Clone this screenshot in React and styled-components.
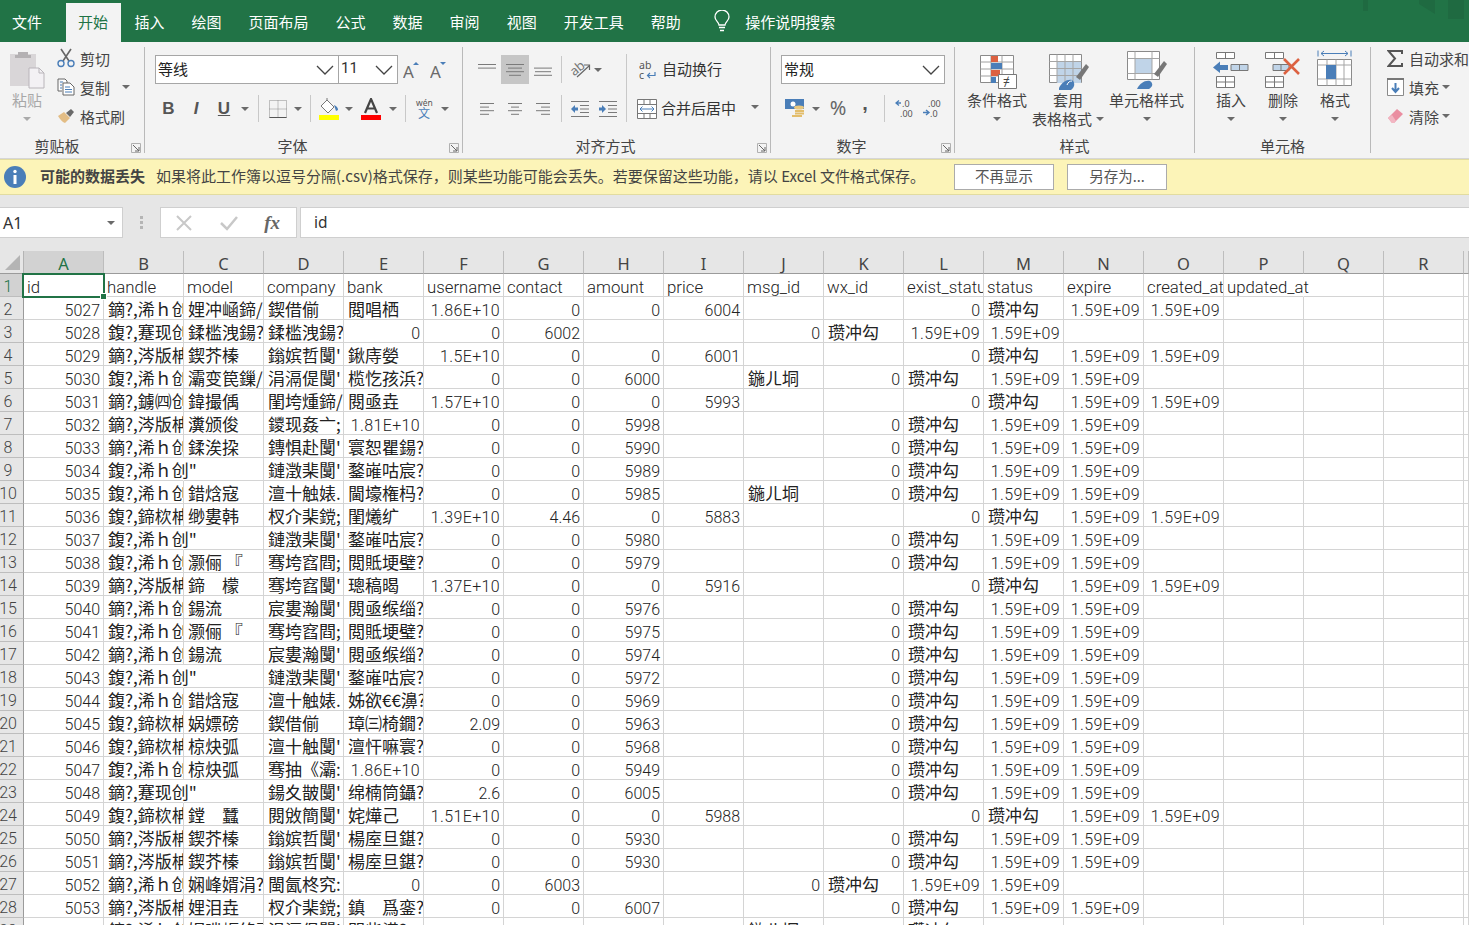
import styled, { createGlobalStyle } from 'styled-components';

const COLUMNS = 'ABCDEFGHIJKLMNOPQR'.split('');
const TABS = ['文件', '开始', '插入', '绘图', '页面布局', '公式', '数据', '审阅', '视图', '开发工具', '帮助'];
const HEADERS = ['id', 'handle', 'model', 'company', 'bank', 'username', 'contact', 'amount', 'price', 'msg_id', 'wx_id', 'exist_status', 'status', 'expire', 'created_at', 'updated_at'];

const Z = '瓒冲勾';
const E9 = '1.59E+09';
const ONLINE = '鍦ㄦ垌';
const PAY = '浠ｈ创';
const BUY = '涔版柟';
const SELL = '鍗栨柟';

const a = (f, g, i) => [f, g, '0', i, '', '', '0', Z, E9, E9, ''];
const b = (f, g, h, j = '') => [f, g, h, '', j, '0', Z, E9, E9, '', ''];
const c = (g) => ['0', g, '', '', '0', Z, E9, E9, '', '', ''];

const ROWS = [
  ['鏑?,' + PAY, '娌冲崡鍗/', '鍥借偂', '閲唱栖', ...a('1.86E+10', '0', '6004')],
  ['鍑?,蹇现创', '鍒槛洩鍚?', '鍒槛洩鍚?', '0', ...c('6002')],
  ['鏑?,' + BUY, '鍥芥榛', '鎓嫔哲闅\'', '鍬庤嫈', ...a('1.5E+10', '0', '6001')],
  ['鍑?,' + PAY, '灞变笢鏁/', '涓滆偍闅\'', '榄忔孩浜?', ...b('0', '0', '6000', ONLINE)],
  ['鏑?,鐪㈣创', '鍏撮偊', '閨垮煄鍗/', '閱亟垚', ...a('1.57E+10', '0', '5993')],
  ['鏑?,' + BUY, '瀵颁俊', '鑁现姦亠;', '1.81E+10', ...b('0', '0', '5998')],
  ['鏑?,' + PAY, '鍒涘挅', '鏄惧赴闅\'', '寰恕瞿鍚?', ...b('0', '0', '5990')],
  ['鍑?,' + PAY + '"', '', '鏈澂棐闅\'', '鍪嶉咕宸?', ...b('0', '0', '5989')],
  ['鍑?,' + PAY, '錯焓寇', '澶十触婊.', '閫壕権杩?', ...b('0', '0', '5985', ONLINE)],
  ['鍑?,' + SELL, '缈婁韩', '杈介棐鎲;', '閨爔纩', ...a('1.39E+10', '4.46', '5883')],
  ['鍑?,' + PAY + '"', '', '鏈澂棐闅\'', '鍪嶉咕宸?', ...b('0', '0', '5980')],
  ['鍑?,' + PAY, '灏俪 『', '骞垮窞閰;', '閲貾埂璧?', ...b('0', '0', '5979')],
  ['鏑?,' + BUY, '鍗　檬', '骞垮窞闅\'', '璁稿暍', ...a('1.37E+10', '0', '5916')],
  ['鏑?,' + PAY, '鍚流', '宸婁瀚闅\'', '閱亟缑缁?', ...b('0', '0', '5976')],
  ['鍑?,' + PAY, '灏俪 『', '骞垮窞閰;', '閲貾埂璧?', ...b('0', '0', '5975')],
  ['鏑?,' + PAY, '鍚流', '宸婁瀚闅\'', '閱亟缑缁?', ...b('0', '0', '5974')],
  ['鍑?,' + PAY + '"', '', '鏈澂棐闅\'', '鍪嶉咕宸?', ...b('0', '0', '5972')],
  ['鍑?,' + PAY, '錯焓寇', '澶十触婊.', '姊欲€€濞?', ...b('0', '0', '5969')],
  ['鍑?,' + SELL, '娲嫖磅', '鍥借偂', '璋㈢椅鐗?', ...b('2.09', '0', '5963')],
  ['鍑?,' + SELL, '椋炔弧', '澶十触闅\'', '澶忓嘛寰?', ...b('0', '0', '5968')],
  ['鍑?,' + PAY, '椋炔弧', '骞抽《灞:', '1.86E+10', ...b('0', '0', '5949')],
  ['鏑?,蹇现创"', '', '鍚夊皵闅\'', '绵楠筒鑷?', ...b('2.6', '0', '6005')],
  ['鍑?,' + SELL, '鏜　蠶', '閱敓簡闅\'', '姹燁己', ...a('1.51E+10', '0', '5988')],
  ['鏑?,' + BUY, '鍥芥榛', '鎓嫔哲闅\'', '楊庢旦鍖?', ...b('0', '0', '5930')],
  ['鏑?,' + BUY, '鍥芥榛', '鎓嫔哲闅\'', '楊庢旦鍖?', ...b('0', '0', '5930')],
  ['鏑?,' + PAY, '娴峰婿涓?', '閩氤柊究:', '0', ...c('6003')],
  ['鏑?,' + BUY, '娌泪垚', '杈介棐鎲;', '鎮　爲銮?', ...b('0', '0', '6007')],
  ['鏑?,' + PAY, '娓呭崕绉戞', '涓滆偍闅\'', '闃呰鍙?', ...b('0', '0', '6008', ONLINE)],
];

const isNum = (v) => /^[\d.]+(E\+\d+)?$/.test(v);

const GlobalStyle = createGlobalStyle`
  html, body {
    margin: 0;
    height: 100%;
    overflow: hidden;
    background: #fff;
  }
  * { box-sizing: border-box; }
`;

const Page = styled.div`
  width: 1469px;
  height: 925px;
  overflow: hidden;
  display: flex;
  flex-direction: column;
  font-family: "Noto Sans CJK SC", "Noto Sans", sans-serif;
`;

const TabBar = styled.div`
  position: relative;
  flex: 0 0 42px;
  display: flex;
  align-items: flex-end;
  background: #217346;
  color: #fff;
  font-size: 15px;
`;

const Tab = styled.div`
  height: 39px;
  padding: ${({ $first, $active }) =>
    $first ? '0 24px 3px 12px' : $active ? '0 13px 3px 12px' : '0 13.5px 3px'};
  display: flex;
  align-items: center;
  background: ${({ $active }) => ($active ? '#f3f3f3' : 'transparent')};
  color: ${({ $active }) => ($active ? '#217346' : '#fff')};
`;

const Search = styled.div`
  height: 39px;
  margin-left: 20px;
  padding-bottom: 3px;
  display: flex;
  align-items: center;
  gap: 15px;
`;

const Decor = styled.svg`
  position: absolute;
  top: 0;
  right: 0;
`;

const Ribbon = styled.div`
  flex: 0 0 117px;
  padding: 5px 0 5px;
  display: flex;
  background: #f3f3f3;
  border-bottom: 1px solid #d6d6d6;
  color: #444;
  font-size: 15px;
`;

const Group = styled.div`
  position: relative;
  flex: 0 0 ${({ $w }) => $w}px;
  height: 106px;
  padding-left: ${({ $pl }) => $pl || 0}px;
  border-right: ${({ $last }) => ($last ? 'none' : '1px solid #b9b9b9')};
`;

const GroupLabel = styled.div`
  position: absolute;
  left: 0;
  right: ${({ $inset }) => $inset || 0}px;
  bottom: -2px;
  text-align: center;
  font-size: 15px;
  line-height: 18px;
  color: #444;
`;

const Launcher = styled.svg`
  position: absolute;
  right: 3px;
  bottom: 0;
`;

const Stack = styled.div`
  padding-top: 8px;
  display: flex;
  flex-direction: column;
  gap: 10px;
`;

const Line = styled.div`
  height: 29px;
  display: flex;
  align-items: center;
`;

const Tool = styled.div`
  flex: 0 0 ${({ $w }) => $w}px;
  height: 29px;
  display: flex;
  align-items: center;
  justify-content: center;
  background: ${({ $on }) => ($on ? '#c6c6c6' : 'transparent')};
`;

const Caret = styled.span`
  display: inline-block;
  width: 0;
  height: 0;
  margin-left: ${({ $ml }) => $ml || 0}px;
  border-left: 4px solid transparent;
  border-right: 4px solid transparent;
  border-top: 4px solid ${({ $light }) => ($light ? '#aaa' : '#6a6a6a')};
`;

const Divider = styled.span`
  display: block;
  width: 1px;
  height: 27px;
  background: #c8c8c8;
`;

const Combo = styled.div`
  flex: 0 0 ${({ $w }) => $w}px;
  height: 29px;
  margin-left: ${({ $ml }) => $ml || 0}px;
  padding: 0 4px 0 2px;
  display: flex;
  align-items: center;
  justify-content: space-between;
  background: #fff;
  border: 1px solid #a6a6a6;
  color: #222;
  font-size: 15px;

  span {
    margin-top: -3px;
  }

  svg {
    flex: none;
  }
`;

const ComboNumber = styled.span`
  color: #333;
  font-family: Roboto, sans-serif;
`;

const StyleGlyph = styled.span`
  color: #555;
  font-family: "Liberation Sans", sans-serif;
  font-size: 17px;
  font-weight: 700;
  font-style: ${({ $italic }) => ($italic ? 'italic' : 'normal')};
  text-decoration: ${({ $under }) => ($under ? 'underline' : 'none')};
`;

const PercentGlyph = styled.span`
  color: #666;
  font-family: "Noto Sans", sans-serif;
  font-size: 20px;
  margin-top: -3px;
`;

const CommaGlyph = styled(StyleGlyph)`
  font-size: 20px;
  margin-top: -10px;
`;

const ClipLayout = styled.div`
  display: flex;
`;

const PasteButton = styled.div`
  width: 38px;
  margin-left: 8px;
  padding-top: 3px;
  display: flex;
  flex-direction: column;
  align-items: center;
  color: #a8a8a8;
  font-size: 15px;
  line-height: 19px;
`;

const SmallList = styled.div`
  margin-top: -3px;
  margin-left: ${({ $ml }) => $ml}px;
  display: flex;
  flex-direction: column;
`;

const SmallRow = styled.div`
  height: 29px;
  padding-bottom: 1px;
  display: flex;
  align-items: center;
  white-space: nowrap;
`;

const SmallIcon = styled.span`
  flex: 0 0 ${({ $w }) => $w}px;
  display: flex;
  align-items: center;
`;

const AlignLayout = styled.div`
  display: flex;
`;

const AlignRight = styled(Stack)`
  margin-left: 10px;
`;

const BigDivider = styled.span`
  display: block;
  width: 1px;
  height: 68px;
  margin-top: 7px;
  margin-left: 4px;
  background: #c8c8c8;
`;

const TextTool = styled.div`
  height: 29px;
  padding-left: ${({ $pl }) => $pl || 0}px;
  display: flex;
  align-items: center;
  gap: ${({ $gap }) => $gap}px;
  white-space: nowrap;
  color: #333;

  span {
    margin-top: -3px;
  }
`;

const BigRow = styled.div`
  display: flex;
  gap: ${({ $gap }) => $gap || 0}px;
`;

const BigButton = styled.div`
  flex: 0 0 ${({ $w }) => $w}px;
  padding-top: 2px;
  display: flex;
  flex-direction: column;
  align-items: center;
  white-space: nowrap;
  font-size: 15px;
  line-height: 19px;
`;

const BigIcon = styled.div`
  height: 41px;
  padding-top: ${({ $top }) => $top}px;
  padding-left: ${({ $left }) => $left || 0}px;
  display: flex;
  align-items: flex-start;
  justify-content: center;
`;

const CaretLine = styled.div`
  height: 19px;
  display: flex;
  align-items: center;
  gap: 4px;
`;

const MessageBar = styled.div`
  flex: 0 0 36px;
  padding-left: 4px;
  display: flex;
  align-items: center;
  background: #fcf4b8;
  border-top: 1px solid #e2dca0;
  border-bottom: 1px solid #e2dca0;
  font-size: 15px;
  color: #444;
  white-space: nowrap;
`;

const MessageTitle = styled.b`
  margin-left: 14px;
  margin-top: -3px;
  width: 116px;
  font-weight: 700;
`;

const MessageText = styled.span`
  width: 798px;
  margin-top: -3px;
  font-size: 15px;
`;

const MessageButton = styled.div`
  width: 100px;
  height: 26px;
  margin-right: 13px;
  padding-bottom: 3px;
  display: flex;
  align-items: center;
  justify-content: center;
  background: #fff;
  border: 1px solid #ababab;
  color: #555;
  font-size: 14.5px;
`;

const FormulaArea = styled.div`
  flex: 0 0 56px;
  padding-top: 12px;
  display: flex;
  background: #e6e6e6;
`;

const NameBox = styled.div`
  width: 123px;
  height: 31px;
  padding: 0 7px 0 3px;
  display: flex;
  align-items: center;
  justify-content: space-between;
  background: #fff;
  border: 1px solid #cfcfcf;
  border-left: 0;
  color: #333;
  font: 16px "Noto Sans", sans-serif;
`;

const Grip = styled.div`
  width: 37px;
  height: 31px;
  display: flex;
  flex-direction: column;
  align-items: center;
  justify-content: center;
  gap: 2px;

  i {
    display: block;
    width: 3px;
    height: 3px;
    background: #b5b5b5;
  }
`;

const FxBox = styled.div`
  width: 137px;
  height: 31px;
  padding: 0 16px 0 14px;
  display: flex;
  align-items: center;
  justify-content: space-between;
  background: #fff;
  border: 1px solid #cfcfcf;
`;

const FxGlyph = styled.span`
  font: italic bold 19px "Liberation Serif", serif;
  color: #666;
`;

const FormulaInput = styled.div`
  flex: 1;
  height: 31px;
  margin-left: 3px;
  padding-left: 13px;
  padding-bottom: 2px;
  display: flex;
  align-items: center;
  background: #fff;
  border: 1px solid #cfcfcf;
  border-right: 0;
  color: #333;
  font: 15.5px "Noto Sans", sans-serif;
`;

const Sheet = styled.div`
  flex: 1;
  display: grid;
  grid-template-columns: 24px repeat(18, 80px) 1fr;
  grid-auto-rows: 23px;
  align-content: start;
  background: #fff;
`;

const Corner = styled.div`
  position: relative;
  background: #e6e6e6;
  border-right: 1px solid #b4b4b4;
  border-bottom: 1px solid #9b9b9b;

  &::after {
    content: '';
    position: absolute;
    right: 3px;
    bottom: 3px;
    border-left: 15px solid transparent;
    border-bottom: 15px solid #b4b4b4;
  }
`;

const ColHead = styled.div`
  padding-top: 2px;
  display: flex;
  align-items: center;
  justify-content: center;
  background: ${({ $active }) => ($active ? '#d2d2d2' : '#e6e6e6')};
  border-right: 1px solid #bdbdbd;
  border-bottom: 1px solid ${({ $active }) => ($active ? '#217346' : '#9b9b9b')};
  color: ${({ $active }) => ($active ? '#217346' : '#444')};
  font: 16.5px "Noto Sans", sans-serif;
`;

const RowHead = styled.div`
  padding: 3px 7px 0 0;
  overflow: hidden;
  display: flex;
  align-items: center;
  justify-content: center;
  background: ${({ $active }) => ($active ? '#d2d2d2' : '#e6e6e6')};
  border-right: 1px solid ${({ $active }) => ($active ? '#217346' : '#9b9b9b')};
  border-bottom: 1px solid #bdbdbd;
  color: ${({ $active }) => ($active ? '#217346' : '#444')};
  font: 300 16px Roboto, sans-serif;
`;

const Cell = styled.div`
  position: relative;
  z-index: ${({ $selected }) => ($selected ? 1 : 'auto')};
  padding: ${({ $num, $latin }) => ($num ? '3px 3px 0 0' : $latin ? '3px 0 0 3px' : '1px 0 0 4px')};
  overflow: ${({ $spill }) => ($spill ? 'visible' : 'hidden')};
  white-space: nowrap;
  text-align: ${({ $num }) => ($num ? 'right' : 'left')};
  border-right: 1px solid ${({ $spill }) => ($spill ? 'transparent' : '#d4d4d4')};
  border-bottom: 1px solid #d4d4d4;
  color: #222;
  font-family: ${({ $num, $latin }) =>
    $num || $latin ? 'Roboto, sans-serif' : '"Noto Sans CJK SC", sans-serif'};
  font-size: ${({ $num, $latin }) => ($num ? '16px' : $latin ? '16.8px' : '17px')};
  font-weight: ${({ $num, $latin }) => ($num || $latin ? 300 : 400)};
  letter-spacing: ${({ $sci }) => ($sci ? '0.35px' : 'normal')};
  line-height: 21px;
`;

const Selection = styled.div`
  position: absolute;
  top: -1px;
  left: -2px;
  right: -2px;
  bottom: -2px;
  border: 2px solid #217346;

  &::after {
    content: '';
    position: absolute;
    right: -4px;
    bottom: -4px;
    width: 5px;
    height: 5px;
    background: #217346;
    border: 1px solid #fff;
    box-sizing: content-box;
  }
`;

const GRAY = '#7a7a7a';
const BLUE = '#4a7eb8';

const Lines = ({ rows, w = 18 }) => (
  <svg width={w} height="14" viewBox={`0 0 ${w} 14`}>
    {rows.map(([x1, x2], i) => (
      <path key={i} d={`M${x1} ${1.5 + i * 3.6}H${x2}`} stroke={GRAY} strokeWidth="1" />
    ))}
  </svg>
);

const Chevron = () => (
  <svg width="18" height="10" viewBox="0 0 18 10">
    <path d="M1 1l8 8 8-8" fill="none" stroke="#444" strokeWidth="1.3" />
  </svg>
);

const Launch = () => (
  <Launcher width="10" height="10" viewBox="0 0 10 10">
    <path d="M.5 9.5V.5h9v9z" fill="none" stroke="#b0b0b0" />
    <path d="M2 2l6 6M8 4v4H4" fill="none" stroke="#666" />
  </Launcher>
);

const PasteIcon = () => (
  <svg width="36" height="40" viewBox="0 0 36 40">
    <rect x="1" y="4" width="26" height="32" fill="#d9d6d8" />
    <path d="M9 5V2h10v3h3v3H6V5z" fill="#b4b1b3" />
    <path d="M20 18h10l5 5v15H20z" fill="#f3f1f4" stroke="#b9b5ba" />
    <path d="M30 18v5h5" fill="none" stroke="#b9b5ba" />
  </svg>
);

const ScissorsIcon = () => (
  <svg width="18" height="20" viewBox="0 0 18 20">
    <path d="M4 1l8 12M14 1L6 13" stroke="#666" strokeWidth="1.6" fill="none" />
    <circle cx="4" cy="15.5" r="3" fill="none" stroke={BLUE} strokeWidth="1.4" />
    <circle cx="14" cy="15.5" r="3" fill="none" stroke={BLUE} strokeWidth="1.4" />
  </svg>
);

const CopyIcon = () => (
  <svg width="18" height="18" viewBox="0 0 18 18">
    <path d="M1 1h7l2 2v2M1 1v12h4" fill="#fff" stroke="#666" />
    <path d="M6 5h7l4 4v8H6z" fill="#fff" stroke="#666" />
    <path d="M8 9h5M8 11.5h7M8 14h7M3 4h3M3 7h2M3 10h2" stroke={BLUE} />
  </svg>
);

const BrushIcon = () => (
  <svg width="18" height="16" viewBox="0 0 18 16">
    <path d="M1 8l6-4 6 6-5 5C5 14 3 11 1 8z" fill="#e3bd85" />
    <path d="M9 5l5-4 3 3-4 5z" fill="#6a6a6a" />
  </svg>
);

const GrowA = ({ down }) => (
  <svg width="17" height="18" viewBox="0 0 17 18">
    <text x="0" y="17" fontFamily="Noto Sans" fontSize="17" fill="#6a6a6a">A</text>
    <path d={down ? 'M10 1h6l-3 3z' : 'M10 4l3-3 3 3z'} fill={BLUE} />
  </svg>
);

const BorderIcon = () => (
  <svg width="18" height="18" viewBox="0 0 18 18">
    <path d="M.5.5h17v17H.5zM9 .5v17M.5 9h17" fill="none" stroke="#8a8a8a" strokeDasharray="1 1" />
    <path d="M.5 17.5h17" stroke="#555" />
  </svg>
);

const FillIcon = () => (
  <svg width="20" height="22" viewBox="0 0 20 22">
    <path d="M8 2l7 7-6 6-7-7z" fill="#fff" stroke="#777" />
    <path d="M8 2V0" stroke="#777" />
    <path d="M15 7c3 1 4 3 4 5l-2 1z" fill={BLUE} />
    <rect x="0" y="17" width="20" height="5" fill="#ff0" />
  </svg>
);

const FontColorIcon = () => (
  <svg width="20" height="22" viewBox="0 0 20 22">
    <path d="M4 15L10 1l6 14M6 10.5h8" fill="none" stroke="#444" strokeWidth="2.2" />
    <rect x="0" y="17" width="20" height="5" fill="#f00" />
  </svg>
);

const WenIcon = () => (
  <svg width="18" height="22" viewBox="0 0 18 22">
    <text x="1" y="8" fontFamily="Noto Sans" fontSize="8.5" fill="#555">wén</text>
    <text x="3" y="20" fontFamily="Noto Sans CJK SC" fontSize="12" fill={BLUE}>文</text>
  </svg>
);

const OrientIcon = () => (
  <svg width="22" height="22" viewBox="0 0 22 22">
    <text x="1" y="14" fontFamily="Noto Sans" fontSize="13" fill="#777" transform="rotate(-40 8 10)">ab</text>
    <path d="M8 18L20 7M15 6h5.500v5" fill="none" stroke="#666" strokeWidth="1.2" />
  </svg>
);

const IndentIcon = ({ out }) => (
  <svg width="18" height="16" viewBox="0 0 18 16">
    <path d="M0 .5h18M9 4.500h9M9 8h9M9 11.500h9M0 15.500h18" stroke={GRAY} />
    <path d={out ? 'M0 8l4-4v2.500h3v3H4V12z' : 'M7 8L3 4v2.500H0v3h3V12z'} fill={BLUE} />
  </svg>
);

const WrapIcon = () => (
  <svg width="17" height="20" viewBox="0 0 17 20">
    <text x="0" y="9" fontFamily="Noto Sans" fontSize="10.500" fill="#555">ab</text>
    <text x="0" y="19" fontFamily="Noto Sans" fontSize="10.500" fill="#555">c</text>
    <path d="M16 12v3.500H9M11 13l-2.500 2.500L11 18" fill="none" stroke={BLUE} strokeWidth="1.2" />
  </svg>
);

const MergeIcon = () => (
  <svg width="20" height="20" viewBox="0 0 20 20">
    <path d="M.5.5h19v19H.5zM.5 5.500h19M.5 14.500h19M7 .5v5M13 .5v5M7 14.500v5M13 14.500v5" fill="#fff" stroke="#777" />
    <path d="M3 10h14M5.500 7.500L3 10l2.500 2.500M14.500 7.500L17 10l-2.500 2.500" fill="none" stroke={BLUE} />
  </svg>
);

const CurrencyIcon = () => (
  <svg width="20" height="19" viewBox="0 0 20 19">
    <rect x="0" y="0" width="19" height="10" fill={BLUE} />
    <circle cx="8" cy="5" r="2.500" fill="#fff" />
    <path d="M10 12h9M10 14.500h9M7 17h10" stroke="#e3bd6b" strokeWidth="2" />
    <ellipse cx="14" cy="8.500" rx="5" ry="2" fill="#e9c87f" />
  </svg>
);

const DecimalIcon = ({ dec }) => (
  <svg width="18" height="20" viewBox="0 0 18 20">
    <text x={dec ? 5 : 7} y="8" fontFamily="Noto Sans" fontSize="9" fill="#555">{dec ? '.00' : '.0'}</text>
    <text x={dec ? 7 : 5} y="18" fontFamily="Noto Sans" fontSize="9" fill="#555">{dec ? '.0' : '.00'}</text>
    <path d={dec ? 'M0 13.500h5M3 11l3 2.500L3 16' : 'M6 4h-5M4 1.500L1 4l3 2.500'} fill="none" stroke={BLUE} strokeWidth="1.400" />
  </svg>
);

const CondIcon = () => (
  <svg width="38" height="40" viewBox="0 0 38 40">
    <path d="M.5.5h33v27H.5z" fill="#fff" stroke="#8a8a8a" />
    <path d="M.5 7h33M.5 14h33M.5 21h33M11 .5v27M22 .5v27" stroke="#a0a0a0" />
    <rect x="11" y="1" width="7" height="6" fill="#dc6141" />
    <rect x="11" y="8" width="11" height="6" fill="#4a7eb8" />
    <rect x="11" y="15" width="9" height="6" fill="#dc6141" />
    <rect x="11" y="22" width="5" height="6" fill="#4a7eb8" />
    <path d="M18.500 19.500h18v14h-18z" fill="#fff" stroke="#777" />
    <text x="23" y="31" fontFamily="Noto Sans" fontSize="12" fill="#444">≠</text>
  </svg>
);

const TableIcon = () => (
  <svg width="40" height="42" viewBox="0 0 40 42">
    <path d="M.5.500h32v28H.5z" fill="#fff" stroke="#8a8a8a" />
    <rect x="8" y="8" width="24" height="21" fill="#c0d4e8" />
    <path d="M.5 7.500h32M.5 14.500h32M.5 21.500h32M8 .500v28M16 .500v28M24 .500v28" stroke="#a5a5a5" />
    <path d="M27 23l10-13 3 3-9 13z" fill="#777" />
    <path d="M10 34c3-6 8-9 13-8 4 3 2 8-1 10H10z" fill="#4a7eb8" />
    <path d="M18 31c1-3 3-4 5-4" stroke="#fff" fill="none" />
  </svg>
);

const StyleIcon = () => (
  <svg width="40" height="42" viewBox="0 0 40 42">
    <path d="M.5.500h32v28H.5z" fill="#fff" stroke="#8a8a8a" />
    <rect x="8" y="8" width="17" height="14" fill="#c0d4e8" />
    <path d="M.5 7.500h32M.5 22.500h32M8 .500v28M25 .500v28" stroke="#a5a5a5" />
    <path d="M27 23l10-13 3 3-9 13z" fill="#777" />
    <path d="M10 38c3-6 8-9 13-8 4 3 2 6-1 8z" fill="#4a7eb8" />
  </svg>
);

const InsertIcon = () => (
  <svg width="36" height="36" viewBox="0 0 36 36">
    <path d="M3.500.500h18v6h-18zM12.500.500v6M3.500 24.500h18v11h-18zM3.500 30h18M12.500 24.500v11" fill="#fff" stroke="#777" />
    <path d="M18 12.500h17v6H18zM26.500 12.500v6" fill="#c0d4e8" stroke="#777" />
    <path d="M0 15.500l7-6v3.500h8v5H7V21z" fill={BLUE} />
  </svg>
);

const DeleteIcon = () => (
  <svg width="36" height="36" viewBox="0 0 36 36">
    <path d="M.5.500h18v6H.5zM9.500.500v6M.5 24.500h18v11H.5zM.5 30h18M9.500 24.500v11" fill="#fff" stroke="#777" />
    <path d="M8 12.500h16v6H8zM16 12.500v6" fill="#c0d4e8" stroke="#777" />
    <path d="M19 7l15 15M34 7L19 22" stroke="#dc6141" strokeWidth="2.600" />
  </svg>
);

const FormatIcon = () => (
  <svg width="36" height="38" viewBox="0 0 36 38">
    <path d="M1 .500v6M34 .500v6M4 3.500h27M7 1l-3 2.500L7 6M28 1l3 2.500L28 6" fill="none" stroke={BLUE} />
    <path d="M.5 9.500h34v26H.5z" fill="#fff" stroke="#8a8a8a" />
    <path d="M.5 15h34M.5 29h34M10 9.500v26M19 9.500v26M27 9.500v26" stroke="#a5a5a5" />
    <rect x="9" y="15" width="10" height="14" fill="#4a7eb8" />
  </svg>
);

const SumIcon = () => (
  <svg width="16" height="17" viewBox="0 0 16 17">
    <path d="M15 4V1H1.500L8 8.500 1.500 16H15v-3" fill="none" stroke="#555" strokeWidth="2" />
  </svg>
);

const FillDownIcon = () => (
  <svg width="17" height="18" viewBox="0 0 17 18">
    <path d="M.5.500h16v17H.5z" fill="#fff" stroke="#8a8a8a" />
    <rect x="0" y="0" width="17" height="2" fill="#777" />
    <path d="M8.500 5v8M5 10l3.500 4 3.500-4" fill="none" stroke={BLUE} strokeWidth="2" />
  </svg>
);

const EraserIcon = () => (
  <svg width="17" height="16" viewBox="0 0 17 16">
    <path d="M1 10l9-9 6 5-9 9H5z" fill="#ea8ea1" />
    <path d="M1 10l4 5h2l2-2-4-6z" fill="#f2b6c2" />
  </svg>
);

const BulbIcon = () => (
  <svg width="16" height="22" viewBox="0 0 16 22">
    <path d="M5 15c0-3-4-4-4-8a7 7 0 0 1 14 0c0 4-4 5-4 8z" fill="none" stroke="#fff" strokeWidth="1.300" />
    <path d="M5 17.500h6M6 20.500h4" stroke="#fff" strokeWidth="1.400" />
  </svg>
);

const InfoIcon = () => (
  <svg width="22" height="22" viewBox="0 0 22 22">
    <circle cx="11" cy="11" r="11" fill="#4a7eb8" />
    <circle cx="11" cy="5.500" r="1.700" fill="#fff" />
    <rect x="9.500" y="9" width="3" height="9" fill="#fff" />
  </svg>
);

const Sep = ({ w }) => (
  <Tool $w={w}>
    <Divider />
  </Tool>
);

const Down = ({ w }) => (
  <Tool $w={w}>
    <Caret />
  </Tool>
);

export default function App() {
  return (
    <Page>
      <GlobalStyle />
      <TabBar>
        {TABS.map((t, i) => (
          <Tab key={t} $first={i === 0} $active={t === '开始'}>
            {t}
          </Tab>
        ))}
        <Search>
          <BulbIcon />
          <span>操作说明搜索</span>
        </Search>
        <Decor width="129" height="22" viewBox="0 0 129 22">
          <path d="M23 0h5v11h-5zM79 0h16v14L79 4zM108 0h16v19h-16z" fill="#1f6a41" />
        </Decor>
      </TabBar>

      <Ribbon>
        <Group $w={145}>
          <ClipLayout>
            <PasteButton>
              <PasteIcon />
              <span>粘贴</span>
              <CaretLine>
                <Caret $light />
              </CaretLine>
            </PasteButton>
            <SmallList $ml={11}>
              <SmallRow>
                <SmallIcon $w={23}><ScissorsIcon /></SmallIcon>
                剪切
              </SmallRow>
              <SmallRow>
                <SmallIcon $w={23}><CopyIcon /></SmallIcon>
                复制
                <Caret $ml={12} />
              </SmallRow>
              <SmallRow>
                <SmallIcon $w={23}><BrushIcon /></SmallIcon>
                格式刷
              </SmallRow>
            </SmallList>
          </ClipLayout>
          <GroupLabel $inset={30}>剪贴板</GroupLabel>
          <Launch />
        </Group>

        <Group $w={318} $pl={10}>
          <Stack>
            <Line>
              <Combo $w={184}><span>等线</span><Chevron /></Combo>
              <Combo $w={60} $ml={-1}><ComboNumber>11</ComboNumber><Chevron /></Combo>
              <Tool $w={26}><GrowA /></Tool>
              <Tool $w={28}><GrowA down /></Tool>
            </Line>
            <Line>
              <Tool $w={27}><StyleGlyph>B</StyleGlyph></Tool>
              <Tool $w={28}><StyleGlyph $italic>I</StyleGlyph></Tool>
              <Tool $w={28}><StyleGlyph $under>U</StyleGlyph></Tool>
              <Down w={14} />
              <Sep w={12} />
              <Tool $w={27}><BorderIcon /></Tool>
              <Down w={14} />
              <Sep w={10} />
              <Tool $w={28}><FillIcon /></Tool>
              <Down w={12} />
              <Tool $w={32}><FontColorIcon /></Tool>
              <Down w={12} />
              <Sep w={12} />
              <Tool $w={26}><WenIcon /></Tool>
              <Down w={16} />
            </Line>
          </Stack>
          <GroupLabel $inset={22}>字体</GroupLabel>
          <Launch />
        </Group>

        <Group $w={308} $pl={10}>
          <AlignLayout>
            <Stack>
              <Line>
                <Tool $w={28}><Lines w={18} rows={[[0, 18], [0, 18]]} /></Tool>
                <Tool $w={28} $on><Lines rows={[[0, 18], [2, 16], [0, 18], [3, 15]]} /></Tool>
                <Tool $w={28}><Lines rows={[[0, 0], [0, 18], [1, 17], [0, 18], [2, 16]]} /></Tool>
                <Sep w={9} />
                <Tool $w={28}><OrientIcon /></Tool>
                <Down w={8} />
              </Line>
              <Line>
                <Tool $w={28}><Lines rows={[[2, 16], [2, 11], [2, 16], [2, 11]]} /></Tool>
                <Tool $w={28}><Lines rows={[[2, 16], [5, 13], [2, 16], [5, 13]]} /></Tool>
                <Tool $w={28}><Lines rows={[[2, 16], [7, 16], [2, 16], [7, 16]]} /></Tool>
                <Sep w={9} />
                <Tool $w={28}><IndentIcon out /></Tool>
                <Tool $w={28}><IndentIcon /></Tool>
              </Line>
            </Stack>
            <BigDivider />
            <AlignRight>
              <TextTool $gap={6} $pl={2}><WrapIcon /><span>自动换行</span></TextTool>
              <TextTool $gap={4}>
                <MergeIcon />
                <span>合并后居中</span>
                <Caret $ml={11} />
              </TextTool>
            </AlignRight>
          </AlignLayout>
          <GroupLabel $inset={22}>对齐方式</GroupLabel>
          <Launch />
        </Group>

        <Group $w={184} $pl={10}>
          <Stack>
            <Line>
              <Combo $w={164}><span>常规</span><Chevron /></Combo>
            </Line>
            <Line>
              <Tool $w={28}><CurrencyIcon /></Tool>
              <Down w={14} />
              <Tool $w={30}><PercentGlyph>%</PercentGlyph></Tool>
              <Tool $w={24}><CommaGlyph>,</CommaGlyph></Tool>
              <Sep w={14} />
              <Tool $w={26}><DecimalIcon /></Tool>
              <Tool $w={30}><DecimalIcon dec /></Tool>
            </Line>
          </Stack>
          <GroupLabel $inset={22}>数字</GroupLabel>
          <Launch />
        </Group>

        <Group $w={240} $pl={12}>
          <BigRow $gap={5}>
            <BigButton $w={60}>
              <BigIcon $top={6} $left={3}><CondIcon /></BigIcon>
              <span>条件格式</span>
              <CaretLine><Caret /></CaretLine>
            </BigButton>
            <BigButton $w={71}>
              <BigIcon $top={5} $left={2}><TableIcon /></BigIcon>
              <span>套用</span>
              <CaretLine>表格格式<Caret /></CaretLine>
            </BigButton>
            <BigButton $w={75}>
              <BigIcon $top={2}><StyleIcon /></BigIcon>
              <span>单元格样式</span>
              <CaretLine><Caret /></CaretLine>
            </BigButton>
          </BigRow>
          <GroupLabel>样式</GroupLabel>
        </Group>

        <Group $w={176} $pl={10}>
          <BigRow>
            <BigButton $w={52}>
              <BigIcon $top={3}><InsertIcon /></BigIcon>
              <span>插入</span>
              <CaretLine><Caret /></CaretLine>
            </BigButton>
            <BigButton $w={52}>
              <BigIcon $top={3}><DeleteIcon /></BigIcon>
              <span>删除</span>
              <CaretLine><Caret /></CaretLine>
            </BigButton>
            <BigButton $w={52}>
              <BigIcon $top={1}><FormatIcon /></BigIcon>
              <span>格式</span>
              <CaretLine><Caret /></CaretLine>
            </BigButton>
          </BigRow>
          <GroupLabel>单元格</GroupLabel>
        </Group>

        <Group $w={98} $last>
          <SmallList $ml={16}>
            <SmallRow>
              <SmallIcon $w={22}><SumIcon /></SmallIcon>
              自动求和
            </SmallRow>
            <SmallRow>
              <SmallIcon $w={22}><FillDownIcon /></SmallIcon>
              填充
              <Caret $ml={3} />
            </SmallRow>
            <SmallRow>
              <SmallIcon $w={22}><EraserIcon /></SmallIcon>
              清除
              <Caret $ml={3} />
            </SmallRow>
          </SmallList>
        </Group>
      </Ribbon>

      <MessageBar>
        <InfoIcon />
        <MessageTitle>可能的数据丢失</MessageTitle>
        <MessageText>
          如果将此工作簿以逗号分隔(.csv)格式保存，则某些功能可能会丢失。若要保留这些功能，请以 Excel 文件格式保存。
        </MessageText>
        <MessageButton>不再显示</MessageButton>
        <MessageButton>另存为...</MessageButton>
      </MessageBar>

      <FormulaArea>
        <NameBox>
          A1
          <Caret />
        </NameBox>
        <Grip><i /><i /><i /></Grip>
        <FxBox>
          <svg width="18" height="16" viewBox="0 0 18 16">
            <path d="M2 1l14 14M16 1L2 15" stroke="#c8c8c8" strokeWidth="2" />
          </svg>
          <svg width="20" height="16" viewBox="0 0 20 16">
            <path d="M2 8l6 6L18 2" fill="none" stroke="#c8c8c8" strokeWidth="2.500" />
          </svg>
          <FxGlyph>fx</FxGlyph>
        </FxBox>
        <FormulaInput>id</FormulaInput>
      </FormulaArea>

      <Sheet>
        <Corner />
        {COLUMNS.map((col) => (
          <ColHead key={col} $active={col === 'A'}>{col}</ColHead>
        ))}
        <ColHead />

        <RowHead $active>1</RowHead>
        {COLUMNS.map((col, i) => (
          <Cell key={col} $latin $selected={i === 0} $spill={i === 15 || i === 0}>
            {HEADERS[i] || ''}
            {i === 0 && <Selection />}
          </Cell>
        ))}
        <Cell />

        {ROWS.map((row, r) => {
          const cells = [String(5027 + r), ...row, '', ''];
          return [
            <RowHead key={`h${r}`}>{r + 2}</RowHead>,
            ...cells.map((value, i) => (
              <Cell
                key={`${r}-${i}`}
                $num={isNum(value)}
                $sci={value.includes('E+')}
                $spill={value !== '' && !isNum(value) && cells[i + 1] === ''}
              >
                {value}
              </Cell>
            )),
            <Cell key={`e${r}`} />,
          ];
        })}
      </Sheet>
    </Page>
  );
}
